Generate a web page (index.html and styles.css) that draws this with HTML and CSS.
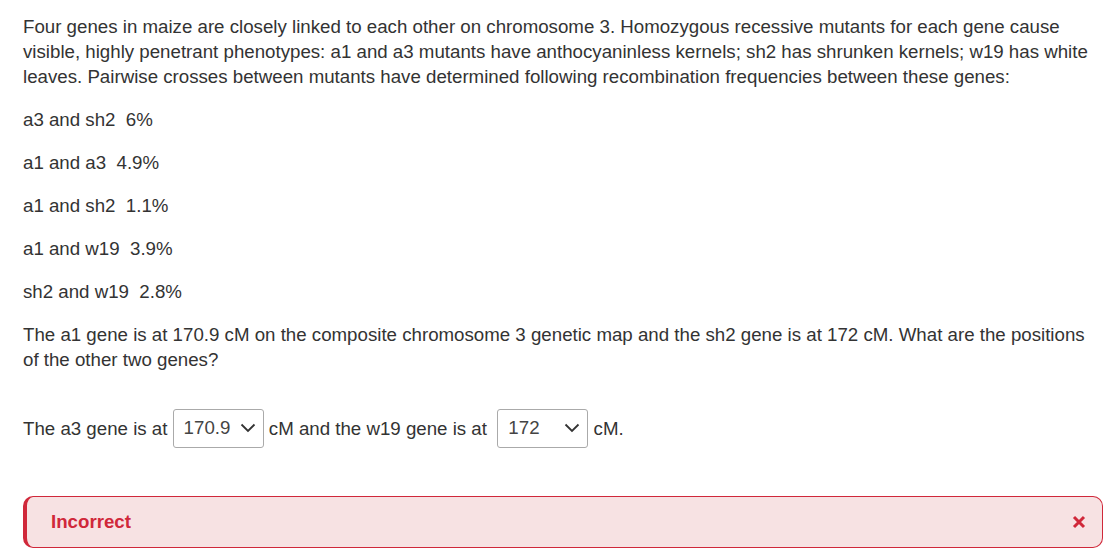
FILE: index.html
```html
<!DOCTYPE HTML>
<html>
    <head>
        <link rel="stylesheet" href="styles.css">
    </head>
    <body>
        <div class="question">
            <p class="intro">Four genes in maize are closely linked to each other on chromosome 3. Homozygous recessive mutants for each gene cause visible, highly penetrant phenotypes: a1 and a3 mutants have anthocyaninless kernels; sh2 has shrunken kernels; w19 has white leaves. Pairwise crosses between mutants have determined following recombination frequencies between these genes:</p>
            <p class="freq">a3 and sh2&nbsp; 6%</p>
            <p class="freq">a1 and a3&nbsp; 4.9%</p>
            <p class="freq">a1 and sh2&nbsp; 1.1%</p>
            <p class="freq">a1 and w19&nbsp; 3.9%</p>
            <p class="freq">sh2 and w19&nbsp; 2.8%</p>
            <p class="intro">The a1 gene is at 170.9 cM on the composite chromosome 3 genetic map and the sh2 gene is at 172 cM. What are the positions of the other two genes?</p>
            <div class="answer">The a3 gene is at <span class="select"><span class="value">170.9</span><svg width="16" height="10" viewBox="0 0 16 10"><path d="M1.5 1.5 L8 8 L14.5 1.5" fill="none" stroke="#333" stroke-width="1.8"/></svg></span> cM and the w19 gene is at &nbsp;<span class="select"><span class="value">172</span><svg width="16" height="10" viewBox="0 0 16 10"><path d="M1.5 1.5 L8 8 L14.5 1.5" fill="none" stroke="#333" stroke-width="1.8"/></svg></span> cM.</div>
        </div>
        <div class="feedback">
            <span class="label">Incorrect</span>
            <svg class="close" width="14" height="14" viewBox="0 0 14 14"><path d="M2 2 L12 12 M12 2 L2 12" stroke="#d0283a" stroke-width="3"/></svg>
        </div>
    </body>
</html>
```

FILE: styles.css
```css
body {
    margin: 0;
    padding: 14px 13px 0 23px;
    font-family: "Liberation Sans", Arial, sans-serif;
    font-size: 18.7px;
    color: #333;
    background: #fff;
}
p {
    margin: 0;
}
.intro {
    line-height: 25px;
    margin-bottom: 18px;
}
.freq {
    line-height: 25px;
    margin-bottom: 18px;
}
.answer {
    margin-top: 37px;
    height: 40px;
    line-height: 40px;
}
.select {
    display: inline-flex;
    align-items: center;
    justify-content: space-between;
    vertical-align: middle;
    box-sizing: border-box;
    width: 91px;
    height: 39px;
    margin-top: -4px;
    padding: 0 7px 0 10px;
    border: 1px solid #aaa;
    border-radius: 3px;
    color: #444;
    line-height: 1;
}
.feedback {
    margin-top: 47px;
    display: flex;
    align-items: center;
    justify-content: space-between;
    box-sizing: border-box;
    height: 52px;
    padding: 0 16px 0 24px;
    background: #f7e2e3;
    border: 1px solid #d0283a;
    border-left: 4px solid #d0283a;
    border-radius: 10px;
}
.label {
    color: #d0283a;
    font-weight: bold;
}
```
